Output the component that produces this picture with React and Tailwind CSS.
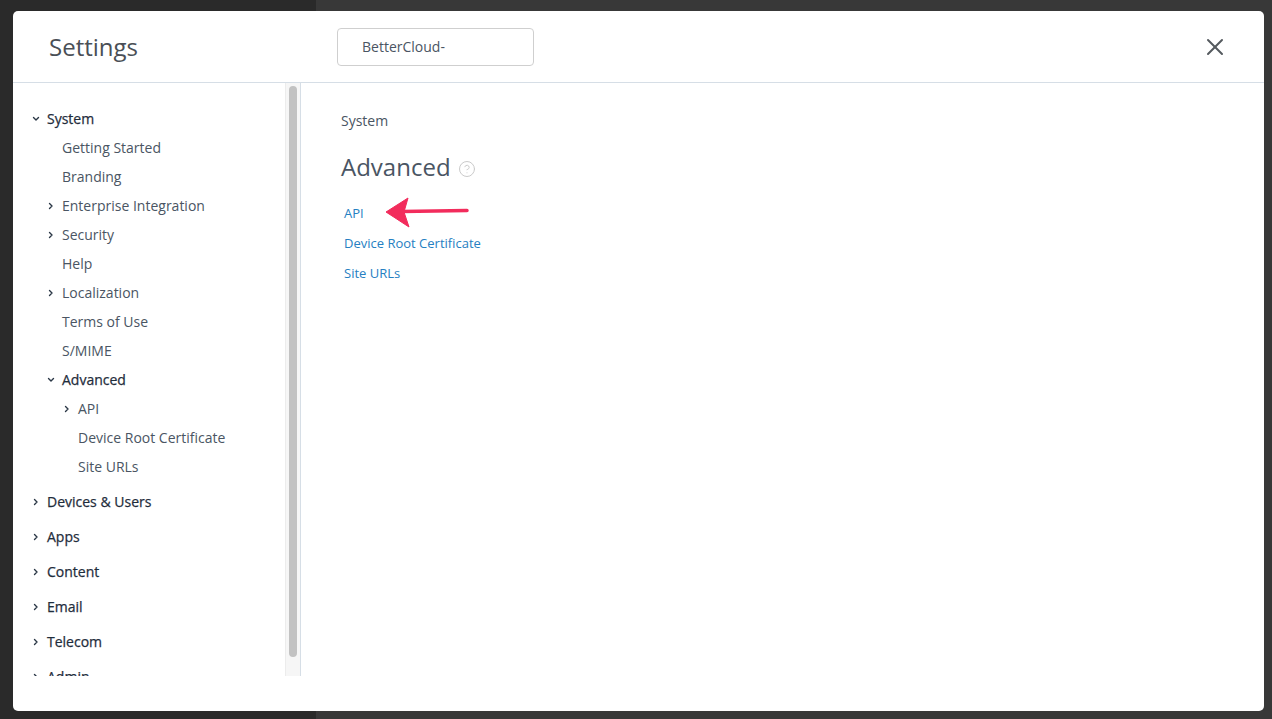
import React from "react";
import { X, CircleHelp } from "lucide-react";

const font = { fontFamily: '"Open Sans", "Noto Sans", Arial, sans-serif' };

function Chevron({ open }) {
  return (
    <svg width="8" height="8" viewBox="0 0 8 8" className="shrink-0">
      {open ? (
        <path d="M1.5 2.5 L4 5 L6.5 2.5" fill="none" stroke="#2a3746" strokeWidth="1.4" strokeLinecap="round" strokeLinejoin="round" />
      ) : (
        <path d="M2.5 1.5 L5 4 L2.5 6.5" fill="none" stroke="#2a3746" strokeWidth="1.4" strokeLinecap="round" strokeLinejoin="round" />
      )}
    </svg>
  );
}

function Row({ level, label, chevron, top, h }) {
  const pad = level === 0 ? "pl-[19px]" : level === 1 ? "pl-[34px]" : "pl-[50px]";
  return (
    <div className={`flex items-center ${pad} ${h}`}>
      <div className="w-[15px] flex items-center">{chevron ? <Chevron open={chevron === "open"} /> : null}</div>
      <span
        className={
          top
            ? "text-[14px] text-[#1f2d3c] whitespace-nowrap [-webkit-text-stroke:0.25px_#1f2d3c]"
            : "text-[14px] text-[#4a5563] whitespace-nowrap"
        }
      >
        {label}
      </span>
    </div>
  );
}

export default function App() {
  const sub = [
    { level: 1, label: "Getting Started" },
    { level: 1, label: "Branding" },
    { level: 1, label: "Enterprise Integration", chevron: "closed" },
    { level: 1, label: "Security", chevron: "closed" },
    { level: 1, label: "Help" },
    { level: 1, label: "Localization", chevron: "closed" },
    { level: 1, label: "Terms of Use" },
    { level: 1, label: "S/MIME" },
    { level: 1, label: "Advanced", chevron: "open", top: true },
    { level: 2, label: "API", chevron: "closed" },
    { level: 2, label: "Device Root Certificate" },
    { level: 2, label: "Site URLs" },
  ];
  const tops = ["Devices & Users", "Apps", "Content", "Email", "Telecom", "Admin"];

  return (
    <div className="relative w-[1272px] h-[719px] overflow-hidden bg-[#2f2f2f]" style={font}>
      <div className="flex h-full">
        <div className="w-[316px] bg-[#2a2a2a]" />
        <div className="flex-1 bg-[#383838]" />
      </div>

      <div className="absolute left-[13px] top-[11px] w-[1251px] h-[700px] bg-white rounded-[5px] flex flex-col overflow-hidden">
        {/* header */}
        <div className="h-[72px] shrink-0 border-b border-[#d6dee6] flex items-center pl-[36px] pr-[35px]">
          <div className="w-[288px] text-[24px] text-[#4a4f56] leading-none">Settings</div>
          <div className="w-[197px] h-[38px] border border-[#cfcfcf] rounded-[4px] flex items-center pl-[24px] text-[14px] text-[#4a5563]">
            BetterCloud-
          </div>
          <div className="flex-1" />
          <X size={28} strokeWidth={1.7} color="#555a5f" />
        </div>

        {/* body */}
        <div className="flex h-[593px] shrink-0">
          <div className="w-[272px] overflow-hidden pt-[21px]">
            <Row level={0} label="System" chevron="open" top h="h-[29px]" />
            {sub.map((s) => (
              <Row key={s.label} level={s.level} label={s.label} chevron={s.chevron} top={s.top} h="h-[29px]" />
            ))}
            <div className="h-[3px]" />
            {tops.map((t) => (
              <Row key={t} level={0} label={t} chevron="closed" top h="h-[35px]" />
            ))}
          </div>
          <div className="w-[16px] bg-[#f6f6f6] border-l border-[#ececec] border-r border-r-[#d6dee6] pt-[3px] flex justify-center">
            <div className="w-[8px] h-[571px] rounded-full bg-[#c2c2c2]" />
          </div>
          <div className="relative flex-1 pl-[40px] pt-[28px]">
            <div className="text-[14px] text-[#4a5563] leading-[20px]">System</div>
            <div className="flex items-center mt-[20px] h-[32px]">
              <span className="text-[24px] text-[#4a5563] leading-[32px]">Advanced</span>
              <CircleHelp size={18} strokeWidth={1.3} color="#c8c8c8" className="ml-[7px] mt-[4px]" />
            </div>
            <div className="mt-[15px] flex flex-col pl-[3px]">
              <a className="text-[13px] text-[#2680c2] h-[30px] leading-[30px]">API</a>
              <a className="text-[13px] text-[#2680c2] h-[30px] leading-[30px]">Device Root Certificate</a>
              <a className="text-[13px] text-[#2680c2] h-[30px] leading-[30px]">Site URLs</a>
            </div>
            <svg className="absolute left-[83px] top-[113px]" width="88" height="34" viewBox="0 0 88 34">
              <path d="M2 16 L24 2 L20 16 L25 31 Z" fill="#f22c5c" stroke="#f22c5c" strokeWidth="1" strokeLinejoin="round" />
              <path d="M18 15.5 L83 14.5" stroke="#f22c5c" strokeWidth="3.5" strokeLinecap="round" />
            </svg>
          </div>
        </div>
      </div>
    </div>
  );
}
